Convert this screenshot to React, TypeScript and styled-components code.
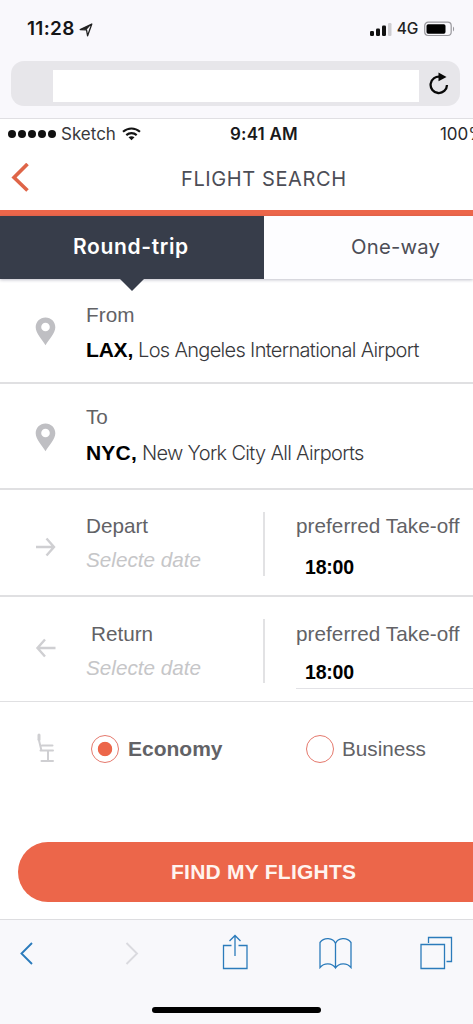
import React from "react";
import styled, { createGlobalStyle } from "styled-components";

const sans = `"Inter", "Liberation Sans", sans-serif`;
const helvetica = `"Liberation Sans", Arial, sans-serif`;
const orange = "#ec664a";
const navy = "#373d4a";
const blue = "#2b7bbb";

const GlobalStyle = createGlobalStyle`
  * { box-sizing: border-box; }
  html, body { margin: 0; padding: 0; overflow: hidden; }
`;

const Screen = styled.div`
  width: 473px;
  height: 1024px;
  overflow: hidden;
  display: flex;
  flex-direction: column;
  background: #fff;
`;

interface LabelProps {
  $size?: number;
  $weight?: number;
  $color?: string;
  $spacing?: number;
  $inter?: boolean;
  $italic?: boolean;
  $left?: number;
}

const Label = styled.span<LabelProps>`
  display: block;
  flex: none;
  white-space: pre;
  line-height: 24px;
  font-family: ${(p) => (p.$inter ? sans : helvetica)};
  font-size: ${(p) => p.$size ?? 20.7}px;
  font-weight: ${(p) => p.$weight ?? 400};
  font-style: ${(p) => (p.$italic ? "italic" : "normal")};
  letter-spacing: ${(p) => p.$spacing ?? 0}px;
  color: ${(p) => p.$color ?? "#626266"};
  margin-left: ${(p) => p.$left ?? 0}px;
`;

const BrowserTop = styled.header`
  height: 119px;
  flex: none;
  background: #f9f8fc;
  border-bottom: 1px solid #e0dfe3;
`;

const PhoneStatus = styled.div`
  height: 61px;
  padding: 17px 18px 0 27px;
  display: flex;
  align-items: flex-start;
  svg { flex: none; }
`;

const LocationIcon = styled.svg`
  margin: 6px 0 0 4px;
`;

const SignalIcon = styled.svg`
  margin-top: 5px;
`;

const BatteryIcon = styled.svg`
  margin: 4px 0 0 6px;
`;

const Spacer = styled.div`
  flex: 1;
`;

const AddressBar = styled.div`
  margin: 0 13px 0 11px;
  height: 45px;
  border-radius: 13px;
  background: #e7e6ea;
  display: flex;
  align-items: center;
`;

const AddressField = styled.div`
  width: 366px;
  height: 32px;
  margin: 4px 0 0 42px;
  background: #fff;
`;

const ReloadIcon = styled.svg`
  margin: 0 0 0 10px;
`;

const MockStatus = styled.div`
  height: 30px;
  flex: none;
  padding-left: 8px;
  display: flex;
  align-items: center;
  svg { flex: none; }
`;

const WifiIcon = styled.svg`
  margin-left: 6px;
`;

const TitleBar = styled.div`
  height: 67px;
  flex: none;
  padding: 14px 0 0 11px;
  display: flex;
  border-bottom: 6px solid ${orange};
  ${Label} { margin-top: 4px; }
`;

const Tabs = styled.nav`
  height: 63px;
  flex: none;
  display: flex;
  box-shadow: 0 1px 3px rgba(50, 50, 80, 0.3);
`;

const Tab = styled.div<{ $active?: boolean }>`
  position: relative;
  width: 264px;
  flex: none;
  padding-top: 19px;
  display: flex;
  align-items: flex-start;
  background: ${(p) => (p.$active ? navy : "#fdfdff")};
`;

const TabPointer = styled.div`
  position: absolute;
  top: 63px;
  left: 120px;
  border: 12px solid transparent;
  border-top-color: ${navy};
  border-bottom: 0;
`;

const Row = styled.section<{ $height: number; $line?: number }>`
  height: ${(p) => p.$height}px;
  flex: none;
  display: flex;
  border-bottom: ${(p) => p.$line ?? 2}px solid #e0e0e2;
`;

const IconCell = styled.div<{ $top: number }>`
  width: 86px;
  flex: none;
  padding: ${(p) => p.$top}px 0 0 35px;
  svg { display: block; }
`;

const Field = styled.div<{ $top: number; $gap: number; $width?: number }>`
  width: ${(p) => (p.$width ? `${p.$width}px` : "auto")};
  flex: none;
  padding-top: ${(p) => p.$top}px;
  display: flex;
  flex-direction: column;
  gap: ${(p) => p.$gap}px;
`;

const Airport = styled.div`
  display: flex;
`;

const Divider = styled.div`
  width: 2px;
  height: 64px;
  flex: none;
  margin: 22px 31px 0 0;
  background: #e2e2e4;
`;

const TimeField = styled(Field)<{ $underlined?: boolean }>`
  flex: 1;
  height: 92px;
  border-bottom: ${(p) => (p.$underlined ? "1px solid #e2e2e6" : "none")};
`;

const ClassRow = styled.section`
  height: 140px;
  flex: none;
  display: flex;
`;

const Radio = styled.div<{ $checked?: boolean }>`
  width: 28px;
  height: 28px;
  flex: none;
  margin-top: 33px;
  border: 1.5px solid #e5796d;
  border-radius: 50%;
  background: ${(p) =>
    p.$checked ? `radial-gradient(circle, ${orange} 6.8px, #fff 7.6px)` : "#fff"};
`;

const ClassOption = styled.div<{ $left: number; $width: number }>`
  display: flex;
  width: ${(p) => p.$width}px;
  margin-left: ${(p) => p.$left}px;
  flex: none;
  ${Label} { margin-top: 35px; }
`;

const SearchButton = styled.div`
  width: 491px;
  height: 60px;
  flex: none;
  margin-left: 18px;
  border-radius: 30px;
  padding: 18px 0 0 153px;
  background: ${orange};
`;

const BottomBar = styled.footer`
  height: 105px;
  margin-top: auto;
  flex: none;
  background: #f8f8fb;
  border-top: 1px solid #dddde0;
  display: flex;
  flex-direction: column;
  align-items: center;
`;

const Toolbar = styled.div`
  width: 100%;
  height: 87px;
  padding: 14px 0 0 18px;
  display: flex;
`;

const ToolIcon = styled.svg<{ $gap?: number }>`
  flex: none;
  height: 40px;
  margin-left: ${(p) => p.$gap ?? 0}px;
  fill: none;
  stroke: ${blue};
  stroke-width: 1.3;
`;

const HomeIndicator = styled.div`
  width: 169px;
  height: 6px;
  border-radius: 3px;
  background: #000;
`;

const Pin = () => (
  <svg width="21" height="29" viewBox="0 0 21 29">
    <path
      fill="#bfbfc3"
      fillRule="evenodd"
      d="M10.5.5C4.9.5.7 4.8.7 10.2c0 6.2 6.2 11.7 9.8 18.1 3.6-6.4 9.8-11.9 9.8-18.1C20.3 4.8 16.1.5 10.5.5Zm0 5.2a4.3 4.3 0 1 1 0 8.6 4.3 4.3 0 0 1 0-8.6Z"
    />
  </svg>
);

const Arrow = ({ left }: { left?: boolean }) => (
  <svg width="22" height="20" viewBox="0 0 22 20" fill="none" stroke="#cfcfd2" strokeWidth="2.4">
    {left ? <path d="M20.5 10H3M10 1.5 2.5 10l7.5 8.5" /> : <path d="M1 10h18M11.5 1.5 19 10l-7.5 8.5" />}
  </svg>
);

const Seat = () => (
  <svg width="22" height="31" viewBox="0 0 22 31" fill="none" stroke="#cfcfd2" strokeWidth="2" strokeLinecap="round">
    <path d="M4 3V7.5" strokeWidth="3" />
    <path d="M3.8 7.5 6.2 17.5M7 13.5H17.500M5.5 18.5H18M13 19v9M6.5 29H18" />
  </svg>
);

export default function App() {
  return (
    <>
      <GlobalStyle />
      <Screen>
        <BrowserTop>
          <PhoneStatus>
            <Label $inter $size={19} $spacing={0.3} $weight={600} $color="#151517">11:28</Label>
            <LocationIcon width="16" height="14" viewBox="0 0 16 14">
              <path d="M1.2 6.6 12.8 1 8.6 12.8 7.5 6.8Z" fill="none" stroke="#222" strokeWidth="1.3" strokeLinejoin="round" />
              <path d="M12.8 1 7.5 6.800 1.200 6.600Z" fill="#222" />
            </LocationIcon>
            <Spacer />
            <SignalIcon width="22" height="14" viewBox="0 0 22 14">
              <rect x="0" y="9" width="4" height="5" rx="1.2" fill="#111" />
              <rect x="6" y="6.5" width="4" height="7.5" rx="1.2" fill="#111" />
              <rect x="12" y="3.5" width="4" height="10.5" rx="1.2" fill="#111" />
              <rect x="18" y="1" width="3.5" height="13" rx="1.2" fill="#cecdd1" />
            </SignalIcon>
            <Label $inter $size={15.5} $weight={500} $color="#222" $left={5} $spacing={-0.3}>4G</Label>
            <BatteryIcon width="31" height="16" viewBox="0 0 31 16">
              <rect x=".7" y="1.2" width="26.5" height="13.3" rx="3.5" fill="none" stroke="#99989d" strokeWidth="1.2" />
              <rect x="2.5" y="3.2" width="19" height="9.5" rx="1.7" fill="#000" />
              <path d="M29 5.5c1.5 1 1.5 4 0 5Z" fill="#99989d" />
            </BatteryIcon>
          </PhoneStatus>
          <AddressBar>
            <AddressField />
            <ReloadIcon width="22" height="24" viewBox="0 0 22 24">
              <path d="M11.5 4.8A8.2 8.2 0 1 0 18 13" fill="none" stroke="#080808" strokeWidth="2.3" />
              <path d="M9.5.5 17.5 5 9.5 9.2Z" fill="#080808" />
            </ReloadIcon>
          </AddressBar>
        </BrowserTop>

        <MockStatus>
          <svg width="48" height="10" viewBox="0 0 48 10">
            {[4, 14, 24, 34, 44].map((x) => (
              <circle key={x} cx={x} cy="5" r="4" fill="#111" />
            ))}
          </svg>
          <Label $inter $size={17} $color="#38383b" $left={5}>Sketch</Label>
          <WifiIcon width="19" height="14" viewBox="0 0 19 14" fill="none" stroke="#151515" strokeWidth="2.1">
            <path d="M1 4.8c5-4.5 12-4.5 17 0M4.3 8.1c3-2.700 7.4-2.700 10.4 0" />
            <path d="M6.5 10.3c1.8-1.5 4.2-1.5 6 0l-3 3Z" fill="#151515" stroke="none" />
          </WifiIcon>
          <Label $inter $size={17} $spacing={0.2} $weight={600} $color="#19191b" $left={89}>9:41 AM</Label>
          <Label $inter $size={17} $color="#28282b" $left={142}>100%</Label>
        </MockStatus>

        <TitleBar>
          <svg width="19" height="30" viewBox="0 0 19 30">
            <path d="M16.5 1 3 14.5l13.5 13" fill="none" stroke="#df6548" strokeWidth="3.6" />
          </svg>
          <Label $inter $size={20} $spacing={0.6} $color="#4c4d56" $left={151}>FLIGHT SEARCH</Label>
        </TitleBar>

        <Tabs>
          <Tab $active>
            <Label $inter $size={21} $spacing={0.65} $weight={600} $color="#fff" $left={73}>Round-trip</Label>
            <TabPointer />
          </Tab>
          <Tab>
            <Label $inter $size={20.3} $spacing={0.2} $color="#4c4d56" $left={87}>One-way</Label>
          </Tab>
        </Tabs>

        <Row $height={105}>
          <IconCell $top={38}><Pin /></IconCell>
          <Field $top={24} $gap={11}>
            <Label $spacing={0.1}>From</Label>
            <Airport>
              <Label $size={21} $spacing={-0.2} $weight={700} $color="#000">LAX,</Label>
              <Label $inter $size={20} $spacing={-0.68} $weight={300} $color="#38383b" $left={5}>Los Angeles International Airport</Label>
            </Airport>
          </Field>
        </Row>

        <Row $height={106}>
          <IconCell $top={39}><Pin /></IconCell>
          <Field $top={21} $gap={12}>
            <Label>To</Label>
            <Airport>
              <Label $size={21} $spacing={0.2} $weight={700} $color="#000">NYC,</Label>
              <Label $inter $size={20} $spacing={-0.68} $weight={300} $color="#38383b" $left={5}>New York City All Airports</Label>
            </Airport>
          </Field>
        </Row>

        <Row $height={107}>
          <IconCell $top={47}><Arrow /></IconCell>
          <Field $top={24} $gap={10} $width={177}>
            <Label>Depart</Label>
            <Label $italic $color="#c6c6c8">Selecte date</Label>
          </Field>
          <Divider />
          <TimeField $top={24} $gap={17}>
            <Label $spacing={0.05}>preferred Take-off</Label>
            <Label $size={19.5} $spacing={-0.2} $weight={700} $color="#000" $left={9}>18:00</Label>
          </TimeField>
        </Row>

        <Row $height={105} $line={1}>
          <IconCell $top={41}><Arrow left /></IconCell>
          <Field $top={25} $gap={10} $width={177}>
            <Label $left={5}>Return</Label>
            <Label $italic $color="#c6c6c8">Selecte date</Label>
          </Field>
          <Divider />
          <TimeField $top={25} $gap={14} $underlined>
            <Label $spacing={0.05}>preferred Take-off</Label>
            <Label $size={19.5} $spacing={-0.2} $weight={700} $color="#000" $left={9}>18:00</Label>
          </TimeField>
        </Row>

        <ClassRow>
          <IconCell $top={30}><Seat /></IconCell>
          <ClassOption $left={5} $width={215}>
            <Radio $checked />
            <Label $size={21} $weight={700} $left={9}>Economy</Label>
          </ClassOption>
          <ClassOption $left={0} $width={150}>
            <Radio />
            <Label $left={8}>Business</Label>
          </ClassOption>
        </ClassRow>

        <SearchButton>
          <Label $size={21} $spacing={0.25} $weight={700} $color="#fff4ef">FIND MY FLIGHTS</Label>
        </SearchButton>

        <BottomBar>
          <Toolbar>
            <ToolIcon width="16" viewBox="0 0 16 40">
              <path d="M14 9 3.5 19.5 14 30" strokeWidth="1.9" />
            </ToolIcon>
            <ToolIcon $gap={89} width="16" viewBox="0 0 16 40">
              <path d="M3.5 9 14 19.5 3.5 30" stroke="#dadadf" strokeWidth="1.9" />
            </ToolIcon>
            <ToolIcon $gap={83} width="26" viewBox="0 0 26 40">
              <path d="M9.5 11.5H1.5V34.5h23.5V11.5H16.5M13 22V1.5M7.5 7 13 1.5 18.5 7" />
            </ToolIcon>
            <ToolIcon $gap={71} width="33" viewBox="0 0 33 40">
              <path d="M16.5 9.5C14 3.5 5 3 1 8.5V33.5C5 28.5 13 28.5 16.5 34C20 28.5 28 28.5 32 33.5V8.5C28 3 19 3.5 16.5 9.5V34" />
            </ToolIcon>
            <ToolIcon $gap={68} width="33" viewBox="0 0 33 40">
              <path d="M1 10.5h23.5V34.5H1zM8.5 9V3.5h23V27.5H26.5" />
            </ToolIcon>
          </Toolbar>
          <HomeIndicator />
        </BottomBar>
      </Screen>
    </>
  );
}
